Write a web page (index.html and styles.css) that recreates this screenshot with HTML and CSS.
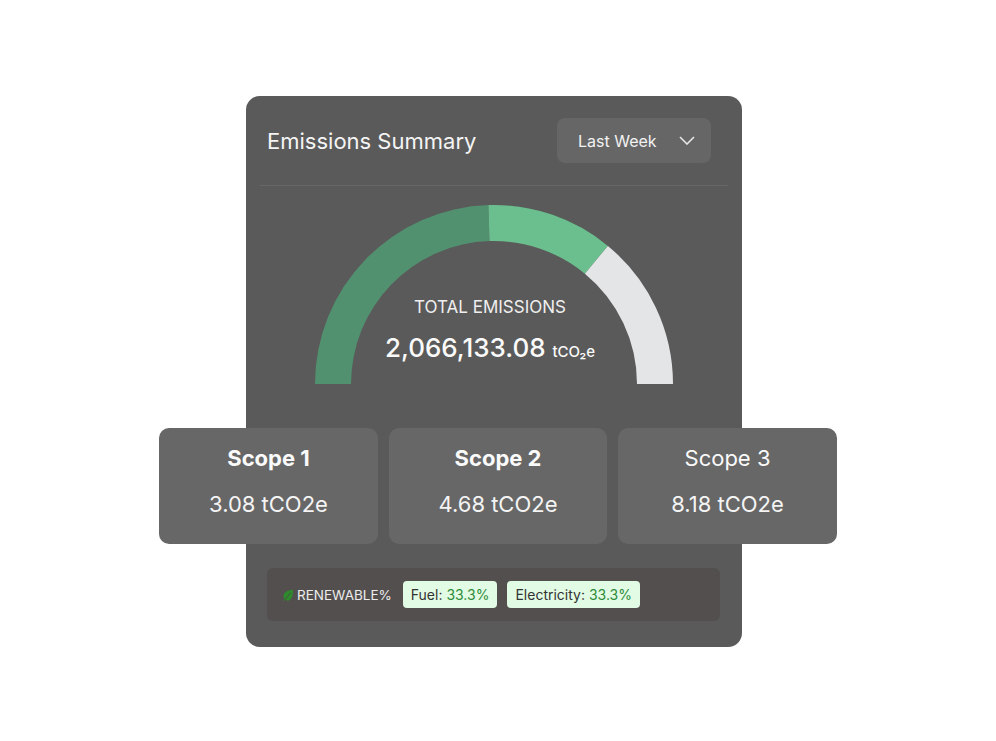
FILE: index.html
```html
<!DOCTYPE html>
<html>
<head>
    <meta charset="utf-8" />
    <title>Emissions Summary</title>
    <link rel="stylesheet" href="styles.css">
</head>
<body>
    <main>
        <section class="panel">
            <header class="panel-head">
                <h2>Emissions Summary</h2>
                <button class="range">
                    <span>Last Week</span>
                    <svg width="16" height="9" viewBox="0 0 16 9"><polyline points="1,1 8,8 15,1" fill="none" stroke="#e6e6e6" stroke-width="1.6"/></svg>
                </button>
            </header>
            <hr class="divider" />

            <div class="gauge">
                <svg width="358" height="180" viewBox="0 0 358 180">
                    <path d="M0 179 A179 179 0 0 1 173.4 0.1 L174.5 36.1 A143 143 0 0 0 36 179 Z" fill="#529170"/>
                    <path d="M173.4 0.1 A179 179 0 0 1 292.9 40.9 L269.9 68.7 A143 143 0 0 0 174.5 36.1 Z" fill="#6bbf8e"/>
                    <path d="M292.9 40.9 A179 179 0 0 1 358 179 L322 179 A143 143 0 0 0 269.9 68.7 Z" fill="#e4e5e7"/>
                </svg>
                <div class="gauge-label">
                    <p class="caption">TOTAL EMISSIONS</p>
                    <p class="total">2,066,133.08 <span>tCO₂e</span></p>
                </div>
            </div>

            <div class="scopes">
                <div class="scope">
                    <h3>Scope 1</h3>
                    <p>3.08 tCO2e</p>
                </div>
                <div class="scope">
                    <h3>Scope 2</h3>
                    <p>4.68 tCO2e</p>
                </div>
                <div class="scope">
                    <h3 class="plain">Scope 3</h3>
                    <p>8.18 tCO2e</p>
                </div>
            </div>

            <div class="renewable">
                <span class="tag">
                    <svg width="12" height="12" viewBox="0 0 12 12"><path d="M11 1C5 1 1.5 3.5 1.5 7.5c0 1.2.4 2.2 1 2.9L1 11.5l.6.6 1.5-1.3c.8.5 1.7.8 2.7.8C9.5 11.6 11 7 11 1z" fill="#2e8a2c"/><path d="M3 10.5C5 7.5 7 5.5 9 4" stroke="#4a4746" stroke-width="0.9" fill="none"/></svg>
                    RENEWABLE%
                </span>
                <span class="chip">Fuel: <b>33.3%</b></span>
                <span class="chip">Electricity: <b>33.3%</b></span>
            </div>
        </section>
    </main>
</body>
</html>
```

FILE: styles.css
```css
body {
    margin: 0;
    padding: 0;
    background: #fff;
    font-family: Inter, "Noto Sans", sans-serif;
}
main {
    padding: 96px 0 0 246px;
}

.panel {
    width: 496px;
    height: 551px;
    box-sizing: border-box;
    background: #5a5a5a;
    border-radius: 14px;
    color: #f2f2f2;
}

.panel-head {
    display: flex;
    align-items: center;
    justify-content: space-between;
    padding: 22px 31px 22px 21px;
}
.panel-head h2 {
    margin: 0;
    font-size: 22px;
    font-weight: 400;
    color: #f4f4f4;
}
.range {
    display: flex;
    align-items: center;
    justify-content: space-between;
    width: 154px;
    height: 45px;
    padding: 0 16px 0 21px;
    border: none;
    border-radius: 8px;
    background: #666;
    color: #f2f2f2;
    font-family: inherit;
    font-size: 16px;
}

.divider {
    margin: 0 14px;
    border: none;
    border-top: 1px solid #676767;
}

.gauge {
    position: relative;
    width: 358px;
    height: 180px;
    margin: 19px auto 0;
}
.gauge svg {
    display: block;
}
.gauge-label {
    position: absolute;
    left: 0;
    right: 0;
    top: 92px;
    text-align: center;
}
.gauge-label .caption {
    margin: 0 0 0 -8px;
    font-size: 17px;
    color: #efefef;
}
.gauge-label .total {
    margin: 15px 0 0 -8px;
    font-size: 26px;
    font-weight: 500;
    color: #fafafa;
}
.gauge-label .total span {
    font-size: 15px;
    font-weight: 500;
}

.scopes {
    display: grid;
    grid-template-columns: 219px 218px 219px;
    gap: 11px;
    margin: 43px 0 0 -87px;
}
.scope {
    height: 116px;
    background: #676767;
    border-radius: 10px;
    text-align: center;
}
.scope h3 {
    margin: 0;
    padding-top: 17px;
    font-size: 22px;
    font-weight: 700;
    color: #fafafa;
}
.scope h3.plain {
    font-weight: 400;
}
.scope p {
    margin: 20px 0 0;
    font-size: 22px;
    color: #f4f4f4;
}

.renewable {
    display: flex;
    align-items: center;
    gap: 10px;
    height: 53px;
    margin: 24px 22px 0 21px;
    padding: 0 15px;
    background: #524f4e;
    border-radius: 6px;
}
.renewable .tag {
    display: flex;
    align-items: center;
    gap: 3px;
    margin-right: 1px;
    font-size: 13.5px;
    color: #ececec;
}
.chip {
    padding: 5px 8px;
    border-radius: 4px;
    background: #e2fbe4;
    color: #333;
    font-size: 14px;
}
.chip b {
    font-weight: 400;
    color: #2e8b3a;
}
```
